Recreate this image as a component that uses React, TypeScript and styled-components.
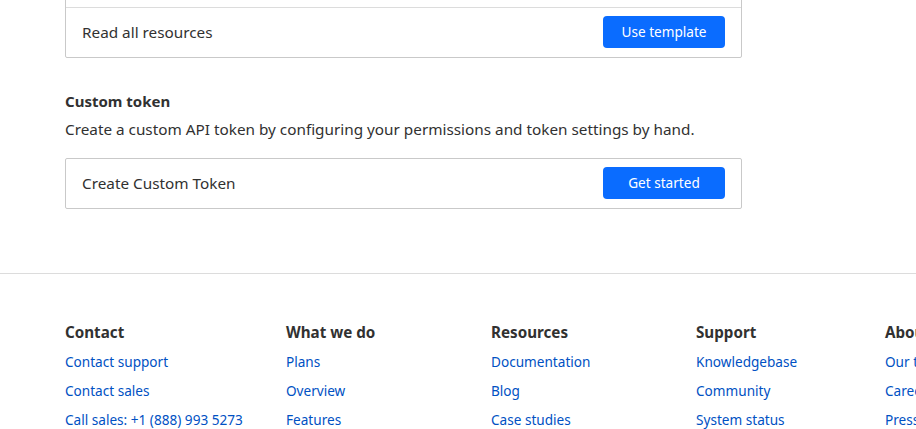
import React from "react";
import styled, { createGlobalStyle } from "styled-components";

const Global = createGlobalStyle`
  html, body { margin: 0; padding: 0; overflow: hidden; background: #fff; }
  body { font-family: "Noto Sans", "Open Sans", sans-serif; color: #313131; width: 916px; }
`;

const Main = styled.main`
  padding: 0 0 0 65px;
  margin-top: -43px;
  width: 677px;
`;

const Card = styled.div`
  border: 1px solid #c9c9c9;
  border-radius: 2px;
  display: flex;
  flex-direction: column;
`;

const Row = styled.div<{ $divider?: boolean }>`
  height: 48px;
  display: flex;
  align-items: center;
  justify-content: space-between;
  padding: 0 16px 1px;
  border-top: ${(p) => (p.$divider ? "1px solid #dcdcdc" : "none")};
`;

const RowLabel = styled.span`
  font-size: 15.3px;
  line-height: 20px;
  padding-bottom: 1px;
  color: #313131;
`;

const Button = styled.button`
  width: 122px;
  height: 32px;
  border: none;
  border-radius: 4px;
  background: #0a6cff;
  color: #fff;
  font-family: inherit;
  font-size: 13.6px;
  padding: 0 0 1px;
  cursor: pointer;
`;

const Section = styled.section`
  margin-top: 32px;
`;

const Heading = styled.h3`
  margin: 0;
  font-size: 15px;
  font-weight: 700;
  line-height: 22px;
`;

const Desc = styled.p`
  margin: 6px 0 18px;
  font-size: 15.3px;
  line-height: 22px;
`;

const Footer = styled.footer`
  margin-top: 64px;
  border-top: 1px solid #dcdcdc;
  padding: 46px 0 0 65px;
  display: grid;
  grid-template-columns: 221px 205px 205px 189px 200px;
  width: 1100px;
`;

const Col = styled.div`
  display: flex;
  flex-direction: column;
`;

const ColTitle = styled.h4`
  margin: 0 0 3px;
  font-size: 15.2px;
  font-weight: 700;
  line-height: 24px;
  color: #313131;
`;

const FLink = styled.a`
  font-size: 13.6px;
  line-height: 29px;
  color: #0051c3;
  text-decoration: none;
  white-space: nowrap;
`;

const cols: [string, string[]][] = [
  ["Contact", ["Contact support", "Contact sales", "Call sales: +1 (888) 993 5273"]],
  ["What we do", ["Plans", "Overview", "Features"]],
  ["Resources", ["Documentation", "Blog", "Case studies"]],
  ["Support", ["Knowledgebase", "Community", "System status"]],
  ["About us", ["Our team", "Careers", "Press"]],
];

export default function App() {
  return (
    <>
      <Global />
      <Main>
        <Card>
          <Row />
          <Row $divider>
            <RowLabel>Read all resources</RowLabel>
            <Button>Use template</Button>
          </Row>
        </Card>
        <Section>
          <Heading>Custom token</Heading>
          <Desc>Create a custom API token by configuring your permissions and token settings by hand.</Desc>
          <Card>
            <Row>
              <RowLabel>Create Custom Token</RowLabel>
              <Button>Get started</Button>
            </Row>
          </Card>
        </Section>
      </Main>
      <Footer>
        {cols.map(([t, links]) => (
          <Col key={t}>
            <ColTitle>{t}</ColTitle>
            {links.map((l) => (
              <FLink key={l} href="#">{l}</FLink>
            ))}
          </Col>
        ))}
      </Footer>
    </>
  );
}
